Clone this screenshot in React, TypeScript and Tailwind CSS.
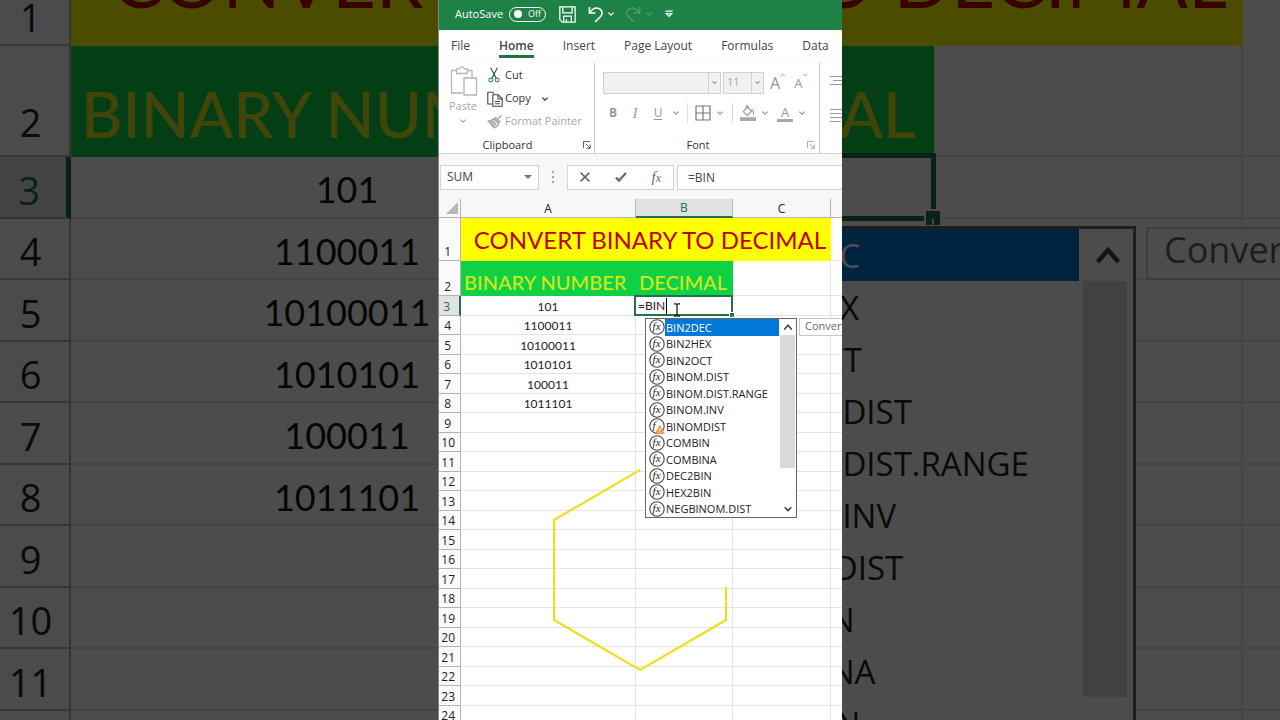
import type { ReactNode } from "react";
import clsx from "clsx";

const FUNCTIONS = [
  "BIN2DEC",
  "BIN2HEX",
  "BIN2OCT",
  "BINOM.DIST",
  "BINOM.DIST.RANGE",
  "BINOM.INV",
  "BINOMDIST",
  "COMBIN",
  "COMBINA",
  "DEC2BIN",
  "HEX2BIN",
  "NEGBINOM.DIST",
];

const VALUES: Record<number, string> = {
  3: "101",
  4: "1100011",
  5: "10100011",
  6: "1010101",
  7: "100011",
  8: "1011101",
};

const TABS = ["File", "Home", "Insert", "Page Layout", "Formulas", "Data"];

function range(from: number, to: number) {
  return Array.from({ length: to - from + 1 }, (_, i) => from + i);
}

function Chevron({ className, up }: { className?: string; up?: boolean }) {
  return (
    <svg viewBox="0 0 8 6" fill="none" stroke="currentColor" strokeWidth="1.3" className={clsx("shrink-0", className)}>
      <path d={up ? "M1 5l3-3.4L7 5" : "M1.4 1.6L4 4.2l2.6-2.6"} />
    </svg>
  );
}

function FxIcon({ warn, className }: { warn?: boolean; className?: string }) {
  return (
    <svg viewBox="0 0 16 16" aria-hidden="true" className={clsx("shrink-0", className)}>
      <circle cx="8" cy="8" r="7.2" fill="#fff" stroke="#444" strokeWidth="1.1" />
      <text x="3.6" y="11.4" fontSize="11" fontStyle="italic" fontFamily="Liberation Serif, serif" fill="#222">
        {warn ? "f" : "fx"}
      </text>
      {warn && (
        <g>
          <path d="M10.8 7.4L15.4 15.6H6.4z" fill="#f0a040" stroke="#d9822b" strokeWidth=".6" />
          <path d="M10.9 10v3M10.9 13.8v1" stroke="#fff" strokeWidth="1" />
        </g>
      )}
    </svg>
  );
}

function Suggestions({ large }: { large?: boolean }) {
  return (
    <div
      className={clsx(
        "absolute z-10 flex border-[#666] bg-white font-['Open_Sans',sans-serif] text-[#222]",
        large ? "left-[29px] top-[69px] h-[630px] w-[482px] border-[3px]" : "left-[9px] top-[22px] h-[200px] w-[152px] border",
      )}
    >
      <ul role="listbox" aria-label="Functions" className="flex min-w-0 flex-1 flex-col">
        {FUNCTIONS.map((name, i) => (
          <li
            key={name}
            role="option"
            aria-selected={i === 0}
            className={clsx("flex min-h-0 flex-1 items-center", large ? "pl-[12px] text-[33px]" : "pl-[3px] text-[11px]")}
          >
            <FxIcon warn={name === "BINOMDIST"} className={large ? "size-[50px]" : "size-4"} />
            <span
              className={clsx(
                "flex h-full flex-1 items-center whitespace-nowrap",
                large ? "pl-1" : "pl-px",
                i === 0 && "bg-[#0078d7] text-white",
              )}
            >
              {name}
            </span>
          </li>
        ))}
      </ul>
      <div
        className={clsx(
          "flex flex-col items-center justify-between text-[#444]",
          large ? "ml-1 w-[50px]" : "w-[17px]",
        )}
      >
        <button aria-label="Scroll up" className={clsx("flex items-center justify-center", large ? "h-[52px]" : "h-4")}>
          <Chevron up className={large ? "h-[22px] w-[28px]" : "h-[8px] w-[10px]"} />
        </button>
        <div className={clsx("flex-1 self-stretch", large ? "mr-[6px]" : "mx-px")}>
          <div className="h-[80%] bg-[#dadada]" />
        </div>
        <button aria-label="Scroll down" className={clsx("flex items-center justify-center", large ? "h-[52px]" : "h-4")}>
          <Chevron className={large ? "h-[22px] w-[28px]" : "h-[8px] w-[10px]"} />
        </button>
      </div>
      <div
        role="tooltip"
        className={clsx(
          "absolute flex items-center whitespace-nowrap border-[#c8c8c8] bg-white text-[#666]",
          large
            ? "left-[489px] top-[-2px] h-[53px] w-[300px] rounded border-2 pb-2 pl-4 text-[36px]"
            : "left-[153px] top-[-1px] h-[18px] w-[100px] border pb-1 pl-[5px] text-[11px]",
        )}
      >
        Conver
      </div>
    </div>
  );
}

// The same sheet, enlarged and dimmed, that fills the space on both sides of the window.
function Backdrop() {
  return (
    <div aria-hidden="true" className="absolute inset-0 isolate overflow-hidden bg-white">
      <table className="-mt-[91px] w-full table-fixed border-separate border-spacing-0 font-[Lato,sans-serif] leading-none">
        <colgroup>
          <col className="w-[71px]" />
          <col className="w-[554px]" />
          <col className="w-[309px]" />
          <col className="w-[309px]" />
          <col />
        </colgroup>
        <tbody>
          <tr className="h-[137px]">
            <BackdropHead row={1} />
            <td colSpan={3} className="overflow-hidden bg-[#ffff00] pr-4 text-right align-bottom">
              <span className="block whitespace-nowrap pb-[29px] text-[76px] text-[#c00000]">CONVERT BINARY TO DECIMAL</span>
            </td>
            <td />
          </tr>
          <tr className="h-[111px]">
            <BackdropHead row={2} />
            <td className="whitespace-nowrap bg-[#0ed145] pb-[11px] pl-[10px] align-bottom text-[64px] font-medium text-[#d6e61e]">
              BINARY NUMBER
            </td>
            <td className="whitespace-nowrap bg-[#0ed145] pb-[11px] pr-[18px] text-right align-bottom text-[64px] font-medium text-[#d6e61e]">
              <span className="float-right">DECIMAL</span>
            </td>
            <td className="border-b-2 border-r-2 border-[#e4e4e4]" />
            <td className="border-b-2 border-[#e4e4e4]" />
          </tr>
          {range(3, 12).map((row) => (
            <tr key={row} className="h-[61px] odd:h-[62px]">
              <BackdropHead row={row} />
              <td className="border-b-2 border-r-2 border-[#e4e4e4] pt-1 text-center text-[36px] text-[#111]">{VALUES[row]}</td>
              <td className="relative border-b-2 border-r-2 border-[#e4e4e4]">
                {row === 3 && (
                  <>
                    <span className="absolute -inset-x-1 -bottom-1 -top-1 border-[5px] border-[#217346]" />
                    <span className="absolute -bottom-2 -right-2 size-4 border-l-2 border-t-2 border-white bg-[#217346]" />
                    <Suggestions large />
                  </>
                )}
              </td>
              <td className="border-b-2 border-r-2 border-[#e4e4e4]" />
              <td className="border-b-2 border-[#e4e4e4]" />
            </tr>
          ))}
        </tbody>
      </table>
      <div className="absolute inset-0 z-20 bg-black/70" />
    </div>
  );
}

function BackdropHead({ row }: { row: number }) {
  return (
    <th
      className={clsx(
        "border-b-2 border-r-2 border-[#b4b4b4] pr-2 align-bottom font-['Open_Sans',sans-serif] text-[38px] font-normal leading-none",
        row === 2 ? "pb-[14px]" : "pb-2",
        row === 3 ? "border-r-[5px] border-r-[#217346] bg-[#e1e1e1] text-[#217346]" : "bg-[#fafafa] text-[#222]",
      )}
    >
      {row}
    </th>
  );
}

function TitleBar() {
  return (
    <header className="flex h-[30px] shrink-0 items-center bg-[#1e8145] pb-[2px] pl-4 text-white">
      <label className="flex items-center gap-[6px] text-[11px]">
        AutoSave
        <span className="relative flex h-[15px] w-[37px] items-center rounded-full border border-white pl-[18px] text-[9px]">
          <input type="checkbox" role="switch" className="absolute left-1 size-2 appearance-none rounded-full bg-white" />
          Off
        </span>
      </label>
      <button aria-label="Save" className="ml-[13px]">
        <svg viewBox="0 0 16 16" fill="none" stroke="currentColor" strokeWidth="1.2" className="size-[17px]">
          <path d="M.8.8h14.4v14.4H3L.8 13zM3.6.8v5.6h8.8V.8M4.4 15V9.6h7.2V15M7 15v-2.6" />
        </svg>
      </button>
      <button aria-label="Undo" className="ml-3 flex items-center gap-[3px]">
        <svg viewBox="0 0 16 18" fill="none" stroke="currentColor" strokeWidth="1.6" className="h-[18px] w-4">
          <path d="M1.4 2v6h6M1.8 7.6C4 4.4 7 2.6 10 3.2c4 .8 5.4 5 2.8 8L7 17" />
        </svg>
        <Chevron className="h-[6px] w-2" />
      </button>
      <button aria-label="Redo" disabled className="ml-[10px] flex items-center gap-1 text-[#4f9d6e]">
        <svg viewBox="0 0 16 18" fill="none" stroke="currentColor" strokeWidth="1.4" className="h-[18px] w-4">
          <path d="M14.6 2v6h-6M14.2 7.6C12 4.4 9 2.6 6 3.2c-4 .8-5.4 5-2.8 8L9 17" />
        </svg>
        <Chevron className="h-[6px] w-2" />
      </button>
      <button aria-label="Customize Quick Access Toolbar" className="ml-3">
        <svg viewBox="0 0 8 8" fill="none" stroke="currentColor" strokeWidth="1.2" className="size-2">
          <path d="M.5 1.2h7M1.2 3.6L4 6.4l2.8-2.8z" />
        </svg>
      </button>
    </header>
  );
}

function Launcher({ className }: { className: string }) {
  return (
    <button aria-label="More options" className={clsx("absolute bottom-1", className)}>
      <svg viewBox="0 0 9 9" fill="none" stroke="currentColor" className="size-2">
        <path d="M.5 8V.5H8M3 3l5 5M8.2 4v4.2H4" />
      </svg>
    </button>
  );
}

function Group({ label, launcher, className, children }: { label: string; launcher: string; className: string; children: ReactNode }) {
  return (
    <section aria-label={label} className={clsx("relative flex shrink-0 flex-col border-r border-[#c8c8c8] pl-2 pr-[26px]", className)}>
      <div className="flex-1">{children}</div>
      <div className="text-center text-[11px] leading-4 text-[#333]">{label}</div>
      <Launcher className={launcher} />
    </section>
  );
}

function Ribbon() {
  return (
    <div className="flex h-[92px] shrink-0 border-b border-[#d4d4d4] bg-white pt-px shadow-sm">
      <Group label="Clipboard" launcher="right-[3px] text-[#444]" className="w-[156px]">
        <div className="flex gap-2">
          <button disabled className="flex w-8 shrink-0 flex-col items-center pt-[3px] text-[11px] leading-4 text-[#a8a8a8]">
            <svg viewBox="0 0 28 30" fill="none" stroke="#b4b4b4" strokeWidth="1.3" className="ml-[2px] h-[30px] w-7">
              <path d="M13 27H1.5V4.5h5M17 4.5h5V11M6.5 2.8H9.4a2.6 2.6 0 0 1 5 0h2.8V7.5H6.5z" />
              <path fill="#fff" d="M14 12h12.5v17H14z" />
            </svg>
            <span className="pt-[2px]">Paste</span>
            <Chevron className="mt-1 h-[6px] w-2" />
          </button>
          <div className="flex flex-col text-[11px] text-[#333]">
            <button className="flex h-6 items-center gap-[5px] pl-px">
              <svg viewBox="0 0 12 16" fill="none" strokeWidth="1.1" className="h-4 w-3">
                <path stroke="#444" d="M2.6.8l5.6 10.4M9.4.8L3.8 11.2" />
                <circle cx="2.8" cy="13" r="1.9" stroke="#2b88b8" />
                <circle cx="9.2" cy="13" r="1.9" stroke="#2b88b8" />
              </svg>
              Cut
            </button>
            <button className="flex h-[23px] items-center gap-[2px]">
              <svg viewBox="0 0 16 16" fill="none" stroke="#444" strokeWidth="1.1" className="size-4">
                <path d="M5 13H.8V1.2h5l1.4 1.4M5.8 3.8h5.4l4 4v7.4H5.8zM11 4v4h4M8 10.5h5M8 12.7h5" />
              </svg>
              Copy
              <Chevron className="ml-2 h-[6px] w-2" />
            </button>
            <button disabled className="flex h-[23px] items-center gap-[2px] whitespace-nowrap text-[#a8a8a8]">
              <svg viewBox="0 0 16 16" fill="none" stroke="#a4a4a4" strokeWidth="1.3" className="size-4">
                <path d="M14.5 1.5l-3.5 3M8 3l5.4 5M7 4.2l5.2 5M6.6 5C5 6.6 3.4 7 1.2 7.2L7.6 14c2-1 3.2-2.6 4-4.6z" />
                <path fill="#c4c4c4" d="M3 8.4l3.6 4.2L8.8 10 6 7.2z" />
              </svg>
              Format Painter
            </button>
          </div>
        </div>
      </Group>
      <Group label="Font" launcher="right-1 text-[#a0a0a0]" className="w-[225px]">
        <div className="flex h-[38px] items-center pt-px text-[#999] *:shrink-0">
          <Picker label="Font name" value="" className="w-[118px]" />
          <Picker label="Font size" value="11" className="ml-[2px] w-[41px]" />
          <button aria-label="Increase font size" className="ml-[6px] flex text-[16px] leading-5">
            A<Chevron up className="h-[4px] w-[6px]" />
          </button>
          <button aria-label="Decrease font size" className="ml-2 flex text-[13px] leading-5">
            A<Chevron className="h-[4px] w-[6px]" />
          </button>
        </div>
        <div className="flex h-6 items-center text-[12px] text-[#999] *:shrink-0">
          <button aria-label="Bold" className="ml-1 w-3 font-bold">B</button>
          <button aria-label="Italic" className="ml-[10px] w-3 font-['Liberation_Serif',serif] text-[14px] italic">I</button>
          <button aria-label="Underline" className="ml-[11px] w-3 underline underline-offset-2">U</button>
          <Chevron className="ml-2 h-[6px] w-2" />
          <i className="ml-[7px] h-5 w-px bg-[#dcdcdc]" />
          <button aria-label="Borders" className="ml-[7px] flex items-center gap-[5px]">
            <svg viewBox="0 0 16 16" fill="none" stroke="#777" strokeWidth="1.2" className="size-4">
              <path d="M1 1h14v14H1zM8 1v14M1 8h14" />
            </svg>
            <Chevron className="h-[6px] w-2" />
          </button>
          <i className="ml-2 h-5 w-px bg-[#dcdcdc]" />
          <button aria-label="Fill color" className="ml-[7px] flex items-center gap-[5px]">
            <svg viewBox="0 0 16 16" fill="none" stroke="#999" strokeWidth="1.1" className="size-4">
              <path d="M3.2 6.6L7.5 2l4 4.2-4.3 4.4zM6.2 3.4V1h2v3M11.2 4.5c2.4.4 2.6 2.5 2.2 5" />
              <path stroke="none" fill="#a8a8a8" d="M0 12.2h16V16H0z" />
            </svg>
            <Chevron className="h-[6px] w-2" />
          </button>
          <button aria-label="Font color" className="ml-2 flex items-center gap-[5px]">
            <span className="w-4 border-b-[3px] border-[#a8a8a8] text-center text-[13px] leading-[14px]">A</span>
            <Chevron className="h-[6px] w-2" />
          </button>
        </div>
      </Group>
      <div className="flex flex-col gap-5 overflow-hidden pl-[10px] pt-3 text-[#999]">
        <svg viewBox="0 0 18 13" stroke="currentColor" className="h-[13px] w-[18px] shrink-0">
          <path d="M0 1.5h18M3 5.5h12M0 9.5h18" />
        </svg>
        <svg viewBox="0 0 18 15" stroke="currentColor" className="h-[15px] w-[18px] shrink-0">
          <path d="M0 1.5h18M0 5.5h11M0 9.5h18M0 13.5h11" />
        </svg>
      </div>
    </div>
  );
}

function Picker({ label, value, className }: { label: string; value: string; className: string }) {
  return (
    <div className={clsx("relative flex h-[22px] items-center border border-[#d0d0d0] bg-[#f1f1ef]", className)}>
      <select aria-label={label} disabled className="h-full w-full appearance-none pl-[3px] text-[11px] text-[#aaa]">
        <option>{value}</option>
      </select>
      <span className="pointer-events-none absolute right-0 flex h-full w-3 items-center justify-center border-l border-[#d0d0d0]">
        <Chevron className="h-[5px] w-[7px]" />
      </span>
    </div>
  );
}

function FormulaBar() {
  return (
    <div className="flex h-[45px] shrink-0 items-center bg-[#f7f7f7] pt-px text-[12px] text-[#444]">
      <div className="ml-px flex h-[25px] w-[99px] shrink-0 items-center border border-[#d4d4d4] bg-white px-[6px]">
        <input aria-label="Name box" defaultValue="SUM" className="w-full min-w-0 bg-transparent outline-none" />
        <button aria-label="Names" className="size-0 shrink-0 border-x-4 border-t-4 border-x-transparent border-t-[#777]" />
      </div>
      <span className="mx-[13px] flex h-3 shrink-0 flex-col justify-between">
        <i className="size-[2px] bg-[#aaa]" />
        <i className="size-[2px] bg-[#aaa]" />
        <i className="size-[2px] bg-[#aaa]" />
      </span>
      <div className="flex h-[25px] w-[107px] shrink-0 items-center justify-between border border-[#d4d4d4] bg-white px-3 text-[#666]">
        <button aria-label="Cancel">
          <svg viewBox="0 0 10 10" stroke="currentColor" strokeWidth="1.5" className="size-[10px]">
            <path d="M.6.6l8.8 8.8M9.4.6L.6 9.4" />
          </svg>
        </button>
        <button aria-label="Enter">
          <svg viewBox="0 0 12 10" fill="none" stroke="currentColor" strokeWidth="2.2" className="h-[10px] w-3">
            <path d="M1 5.6l3 3L11 1" />
          </svg>
        </button>
        <button aria-label="Insert function" className="font-['Liberation_Serif',serif] text-[15px] italic">
          f<span className="text-[12px]">x</span>
        </button>
      </div>
      <input
        aria-label="Formula"
        defaultValue="=BIN"
        className="ml-[3px] h-[25px] min-w-0 flex-1 border border-r-0 border-[#d4d4d4] bg-white pl-[10px] outline-none"
      />
    </div>
  );
}

function RowHead({ row }: { row: number }) {
  return (
    <th
      scope="row"
      className={clsx(
        "border-b border-r border-[#b4b4b4] text-right align-bottom font-['Open_Sans',sans-serif] text-[12px] font-normal leading-[17px]",
        row < 10 ? "pr-[9px]" : "pr-[5px]",
        row === 3 ? "border-r-2 border-r-[#217346] bg-[#e1e1e1] text-[#217346]" : "bg-[#fafafa] text-[#222]",
      )}
    >
      {row}
    </th>
  );
}

function ActiveCell() {
  return (
    <>
      <span className="absolute -bottom-px -left-[2px] -right-px -top-px flex items-center border-2 border-[#217346] bg-white pl-[2px]">
        <input
          aria-label="Cell B3"
          defaultValue="=BIN"
          className="w-[29px] border-r border-black bg-transparent text-[12px] leading-4 text-[#222] outline-none"
        />
      </span>
      <span className="absolute -bottom-[2px] -right-[2px] size-[5px] border-l border-t border-white bg-[#217346]" />
      <Suggestions />
      <svg viewBox="0 0 8 14" fill="none" stroke="#111" strokeWidth="1.2" className="absolute left-[37px] top-[7px] z-20 h-[14px] w-2">
        <path d="M1 .8h2L4 1.6 5 .8h2M4 1.6v11M1 13.2h2l1-.8 1 .8h2" />
      </svg>
    </>
  );
}

function Sheet() {
  return (
    <div className="relative min-h-0 flex-1 overflow-hidden">
      <table className="w-full table-fixed border-separate border-spacing-0 font-[Lato,sans-serif] leading-none">
        <colgroup>
          <col className="w-[22px]" />
          <col className="w-[175px]" />
          <col className="w-[97px]" />
          <col className="w-[98px]" />
          <col />
        </colgroup>
        <thead>
          <tr className="h-[19px] bg-[#f7f7f7] font-['Open_Sans',sans-serif] text-[12px] text-[#222] *:font-normal">
            <td className="border-b border-r border-[#b4b4b4]">
              <svg viewBox="0 0 12 12" className="ml-[7px] size-3">
                <path d="M12 0v12H0z" fill="#b8b8b8" />
              </svg>
            </td>
            <th scope="col" className="border-b border-r border-[#b4b4b4] pt-px">A</th>
            <th scope="col" className="border-b-2 border-r border-b-[#217346] border-r-[#b4b4b4] bg-[#e1e1e1] pt-px text-[#217346]">B</th>
            <th scope="col" className="border-b border-r border-[#b4b4b4] pt-px">C</th>
            <td className="border-b border-[#b4b4b4]" />
          </tr>
        </thead>
        <tbody>
          <tr className="h-[43px]">
            <RowHead row={1} />
            <td colSpan={3} className="whitespace-nowrap bg-[#ffff00] pr-[5px] text-right text-[24px] text-[#c00000]">
              CONVERT BINARY TO DECIMAL
            </td>
            <td className="border-b border-[#e4e4e4]" />
          </tr>
          <tr className="h-[35px] *:whitespace-nowrap">
            <RowHead row={2} />
            <td className="bg-[#0ed145] pl-[3px] pt-[6px] text-[20px] font-medium text-[#d6e61e]">BINARY NUMBER</td>
            <td className="bg-[#0ed145] pl-[3px] pt-[6px] text-[20px] font-medium text-[#d6e61e]">DECIMAL</td>
            <td className="border-b border-r border-[#e4e4e4]" />
            <td className="border-b border-[#e4e4e4]" />
          </tr>
          {range(3, 24).map((row) => (
            <tr key={row} className="h-[19px] odd:h-5">
              <RowHead row={row} />
              <td className="border-b border-r border-[#e4e4e4] pt-[2px] text-center text-[12px] text-[#222]">{VALUES[row]}</td>
              <td className="relative border-b border-r border-[#e4e4e4]">{row === 3 && <ActiveCell />}</td>
              <td className="border-b border-r border-[#e4e4e4]" />
              <td className="border-b border-[#e4e4e4]" />
            </tr>
          ))}
        </tbody>
      </table>
      <svg
        viewBox="0 0 176 204"
        fill="none"
        stroke="#f0df1c"
        strokeWidth="2.2"
        className="absolute left-[113px] top-[269px] h-[204px] w-[176px]"
      >
        <path d="M88 2L2 52v100l86 50 86-50v-33" />
      </svg>
    </div>
  );
}

export default function App() {
  return (
    <div className="relative flex h-screen justify-center overflow-hidden font-['Open_Sans',sans-serif]">
      <Backdrop />
      <main className="relative isolate flex aspect-[101/180] h-full flex-col overflow-hidden border-l border-[#7c8a82] bg-white">
        <TitleBar />
        <nav className="flex h-8 shrink-0 gap-[29px] pl-3 pt-[7px] text-[12px] leading-[18px] text-[#444]">
          {TABS.map((tab) => (
            <a
              key={tab}
              href="#"
              className={clsx("h-[21px] whitespace-nowrap", tab === "Home" && "border-b-[3px] border-[#217346] font-semibold")}
            >
              {tab}
            </a>
          ))}
        </nav>
        <Ribbon />
        <FormulaBar />
        <Sheet />
      </main>
    </div>
  );
}
